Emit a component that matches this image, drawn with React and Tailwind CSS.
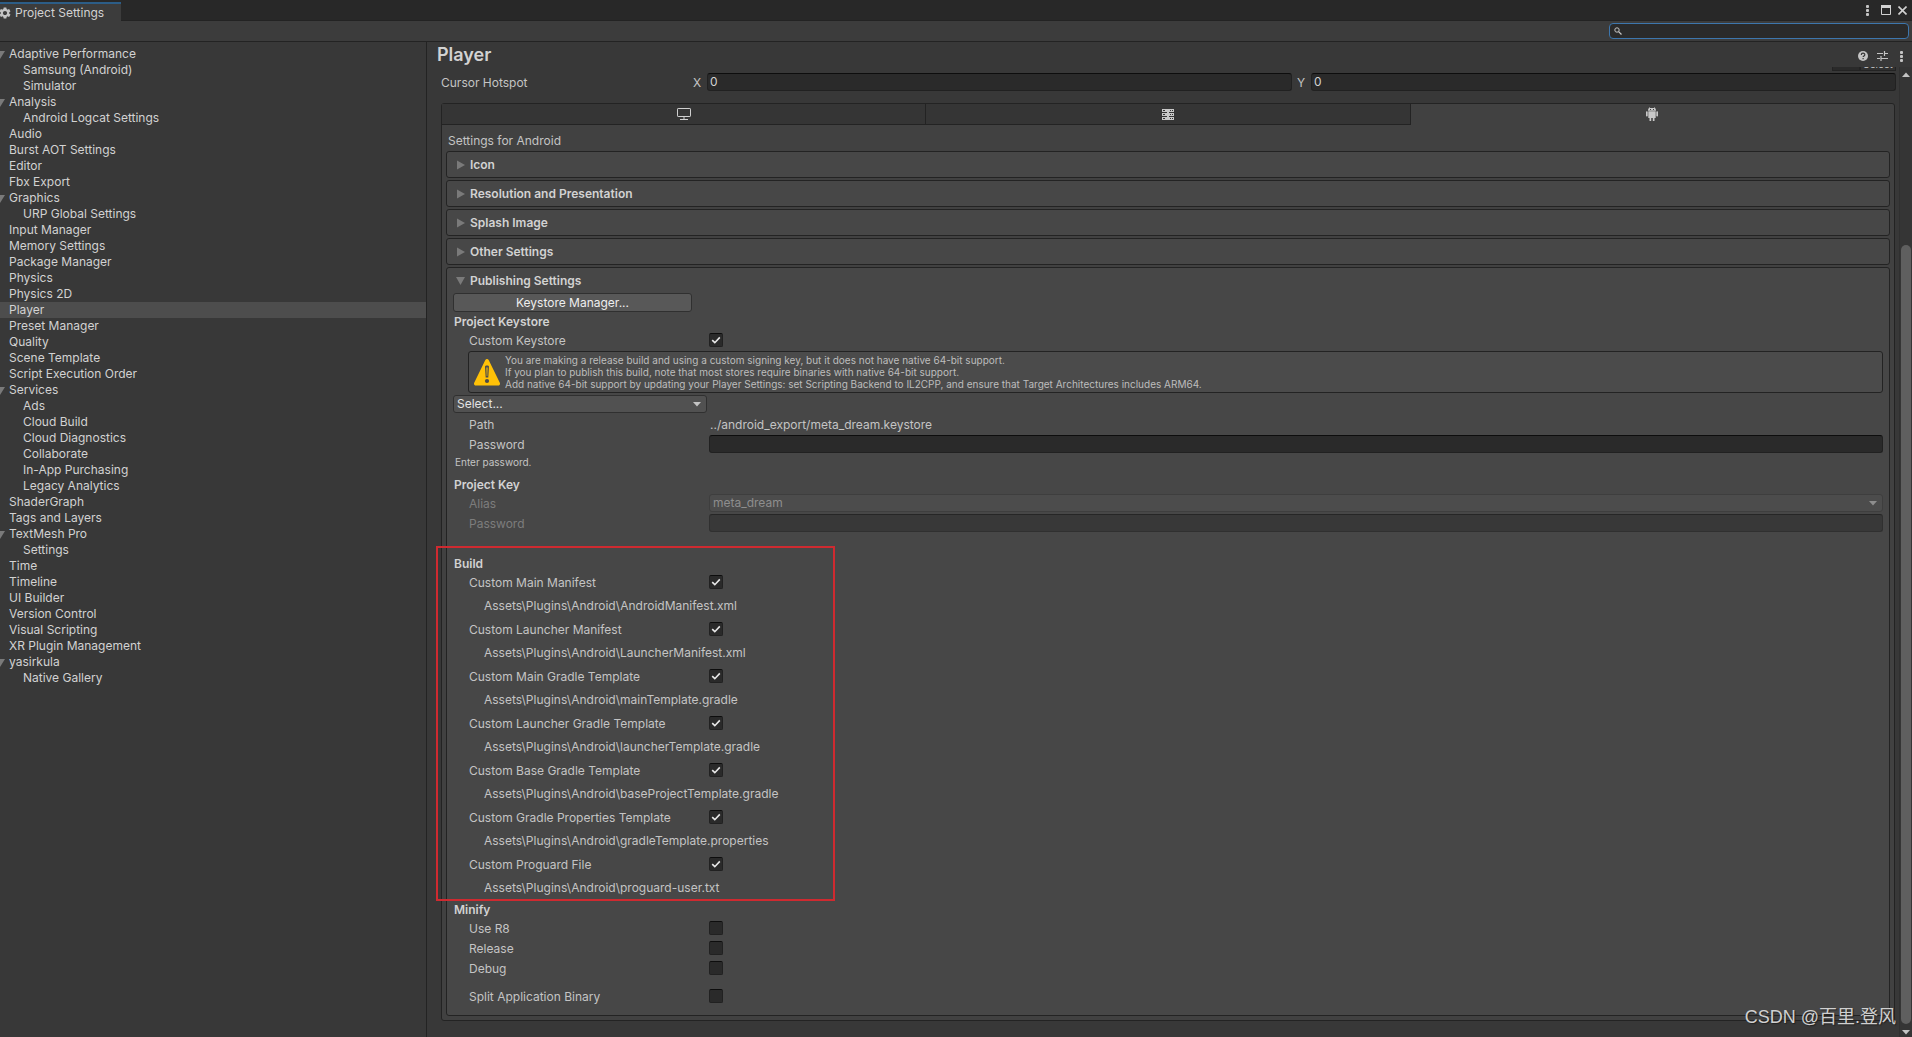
import { useState } from "react";
import { MdSettings } from "react-icons/md";

const navItems = [
  { name: "Adaptive Performance", open: true },
  { name: "Samsung (Android)", child: true },
  { name: "Simulator", child: true },
  { name: "Analysis", open: true },
  { name: "Android Logcat Settings", child: true },
  { name: "Audio" },
  { name: "Burst AOT Settings" },
  { name: "Editor" },
  { name: "Fbx Export" },
  { name: "Graphics", open: true },
  { name: "URP Global Settings", child: true },
  { name: "Input Manager" },
  { name: "Memory Settings" },
  { name: "Package Manager" },
  { name: "Physics" },
  { name: "Physics 2D" },
  { name: "Player" },
  { name: "Preset Manager" },
  { name: "Quality" },
  { name: "Scene Template" },
  { name: "Script Execution Order" },
  { name: "Services", open: true },
  { name: "Ads", child: true },
  { name: "Cloud Build", child: true },
  { name: "Cloud Diagnostics", child: true },
  { name: "Collaborate", child: true },
  { name: "In-App Purchasing", child: true },
  { name: "Legacy Analytics", child: true },
  { name: "ShaderGraph" },
  { name: "Tags and Layers" },
  { name: "TextMesh Pro", open: true },
  { name: "Settings", child: true },
  { name: "Time" },
  { name: "Timeline" },
  { name: "UI Builder" },
  { name: "Version Control" },
  { name: "Visual Scripting" },
  { name: "XR Plugin Management" },
  { name: "yasirkula", open: true },
  { name: "Native Gallery", child: true },
];

const closedSections = [
  "Icon",
  "Resolution and Presentation",
  "Splash Image",
  "Other Settings",
];

const buildFiles = [
  { label: "Custom Main Manifest", file: "AndroidManifest.xml" },
  { label: "Custom Launcher Manifest", file: "LauncherManifest.xml" },
  { label: "Custom Main Gradle Template", file: "mainTemplate.gradle" },
  { label: "Custom Launcher Gradle Template", file: "launcherTemplate.gradle" },
  { label: "Custom Base Gradle Template", file: "baseProjectTemplate.gradle" },
  { label: "Custom Gradle Properties Template", file: "gradleTemplate.properties" },
  { label: "Custom Proguard File", file: "proguard-user.txt" },
];

const fieldClass =
  "h-[18px] min-w-0 rounded-[3px] border border-[#212121] border-t-[#0d0d0d] bg-[#2a2a2a] px-[2px] text-[#d2d2d2] outline-none";

const Dots = () => (
  <svg width="3" height="11" viewBox="0 0 3 11" fill="#c4c4c4">
    <rect x="0" y="0" width="3" height="3" rx="1" />
    <rect x="0" y="4" width="3" height="3" rx="1" />
    <rect x="0" y="8" width="3" height="3" rx="1" />
  </svg>
);

const DesktopIcon = () => (
  <svg width="14" height="13" viewBox="0 0 14 13" fill="none" stroke="#d0d0d0">
    <rect x="0.5" y="0.5" width="13" height="8" rx="0.6" />
    <path d="M7 9v3M3 11.500h8" />
  </svg>
);

const ServerIcon = () => (
  <svg width="12" height="11" viewBox="0 0 12 11">
    <path
      fill="#c8c8c8"
      d="M0 0h12v3H0zM0 4h12v3H0zM0 8h12v3H0zM5 3h2v1H5zM5 7h2v1H5z"
    />
    <path
      fill="#353535"
      d="M1 1h2v1H1zM8 1h1v1H8zM10 1h1v1h-1zM1 5h2v1H1zM8 5h1v1H8zM10 5h1v1h-1zM1 9h2v1H1zM8 9h1v1H8zM10 9h1v1h-1z"
    />
  </svg>
);

const AndroidIcon = () => (
  <svg width="12" height="14" viewBox="0 0 12 14" fill="#c8c8c8">
    <path d="M3 0l1 1h4l1-1v1c.7.6 1 1.500 1 2.500v.2H2v-.2C2 2.500 2.300 1.600 3 1z" />
    <path d="M2.300 4.300h7.400V11H8.500v3H6.800v-3H5.200v3H3.500v-3H2.300z" />
    <rect x="0" y="4.300" width="1.700" height="5.200" rx="0.700" />
    <rect x="10.300" y="4.300" width="1.700" height="5.200" rx="0.700" />
    <path fill="#414141" d="M4 2h1v1H4zM7 2h1v1H7z" />
  </svg>
);

const WarningIcon = () => (
  <svg width="26" height="27" viewBox="0 0 26 27" className="shrink-0">
    <path
      fill="#ffc107"
      d="M11.200 1.200c.8-1.500 2.800-1.500 3.600 0l11 22.600c.6 1.200-.1 2.700-1.500 2.700H1.700c-1.400 0-2.100-1.500-1.500-2.700z"
    />
    <path fill="#4b4b4b" d="M11 7.500c0-1.400 4-1.400 4 0l-.7 11h-2.600z" />
    <path fill="#ffc107" d="M12.400 8.500h1.200l-.3 8.500h-.6z" />
    <circle cx="13" cy="22" r="2.100" fill="#4b4b4b" />
  </svg>
);

const Triangle = ({ open }) => (
  <svg width="9" height="10" viewBox="0 0 9 10" fill="#7a7a7a">
    {open ? <path d="M0 1h9L4.500 9z" /> : <path d="M1 0.500l8 4.500-8 4.500z" />}
  </svg>
);

const Checkbox = ({ id, defaultChecked }) => (
  <span className="grid size-[14px] shrink-0">
    <input
      id={id}
      type="checkbox"
      defaultChecked={defaultChecked}
      className="peer size-[14px] appearance-none rounded-[2px] border border-[#212121] border-t-[#0d0d0d] bg-[#2a2a2a] [grid-area:1/1]"
    />
    <svg
      viewBox="0 0 14 14"
      className="pointer-events-none invisible size-[14px] peer-checked:visible [grid-area:1/1]"
      fill="none"
      stroke="#e8e8e8"
      strokeWidth="1.600"
    >
      <path d="M3.200 7.200l2.600 2.500 5-5.300" />
    </svg>
  </span>
);

const Row = ({ id, label, disabled, children }) => (
  <div className="flex h-[18px] items-center pl-[15px]">
    <label
      htmlFor={id}
      className={`w-60 shrink-0 pt-[2px] ${disabled ? "text-[#7d7d7d]" : ""}`}
    >
      {label}
    </label>
    {children}
  </div>
);

const Heading = ({ children }) => (
  <h3 className="font-semibold leading-[18px] text-[#d2d2d2]">{children}</h3>
);

const Dropdown = ({ id, label, text, disabled }) => (
  <span className="grid w-full">
    <select
      id={id}
      aria-label={label}
      disabled={disabled}
      className={`h-[18px] w-full appearance-none rounded-[3px] border px-[3px] leading-4 outline-none [grid-area:1/1] ${
        disabled
          ? "border-[#3e3e3e] bg-[#4c4c4c] text-[#8e8e8e] opacity-100"
          : "border-[#303030] bg-[#515151] text-[#e4e4e4]"
      }`}
    >
      <option>{text}</option>
    </select>
    <svg
      width="8"
      height="5"
      viewBox="0 0 8 5"
      fill={disabled ? "#8e8e8e" : "#c4c4c4"}
      className="pointer-events-none mr-[6px] self-center justify-self-end [grid-area:1/1]"
    >
      <path d="M0 0h8L4 4.500z" />
    </svg>
  </span>
);

const Sidebar = ({ selected, setSelected }) => (
  <nav className="w-[427px] shrink-0 border-r border-[#232323] pt-1">
    <ul>
      {navItems.map((item) => (
        <li key={item.name}>
          <a
            href="#"
            onClick={() => setSelected(item.name)}
            className={`flex h-4 items-center leading-4 text-[#d2d2d2] ${
              selected === item.name ? "bg-[#4d4d4d]" : ""
            } ${item.child ? "pl-[14px]" : ""}`}
          >
            <svg width="9" height="16" viewBox="0 0 9 16" fill="#7a7a7a">
              {item.open && <path d="M-5 5h10L0 13z" />}
            </svg>
            {item.name}
          </a>
        </li>
      ))}
    </ul>
  </nav>
);

const PublishingSettings = () => (
  <section className="rounded-[3px] border border-[#232323] bg-[#474747] pb-[10px] pl-[6px] pr-[6px]">
    <button className="flex h-[25px] w-full items-center gap-[5px] pl-[3px] font-semibold text-[#d2d2d2]">
      <Triangle open />
      Publishing Settings
    </button>
    <button className="mb-px block h-[19px] w-[239px] rounded-[3px] border border-[#303030] bg-[#585858] leading-[17px] text-[#eeeeee]">
      Keystore Manager...
    </button>
    <div className="pl-px">
      <Heading>Project Keystore</Heading>
      <Row id="keystore" label="Custom Keystore">
        <Checkbox id="keystore" defaultChecked />
      </Row>
      <div className="ml-[14px] mt-[2px] flex h-[42px] items-center gap-[5px] rounded-[3px] border border-[#232323] bg-[#4b4b4b] pl-[5px] text-[10px] leading-3 text-[#bdbdbd]">
        <WarningIcon />
        <p>
          You are making a release build and using a custom signing key, but it does not have native 64-bit support.
          <br />
          If you plan to publish this build, note that most stores require binaries with native 64-bit support.
          <br />
          Add native 64-bit support by updating your Player Settings: set Scripting Backend to IL2CPP, and ensure that Target Architectures includes ARM64.
        </p>
      </div>
    </div>
    <div className="my-[2px] w-[254px]">
      <Dropdown id="existing" label="Select keystore" text="Select..." />
    </div>
    <div className="pl-px">
      <div className="flex flex-col gap-[2px]">
        <Row label="Path">
          <span className="pl-px pt-[2px]">../android_export/meta_dream.keystore</span>
        </Row>
        <Row id="storePass" label="Password">
          <input id="storePass" type="password" className={`${fieldClass} flex-1`} />
        </Row>
      </div>
      <p className="mb-[7px] mt-[2px] pl-px text-[10px] leading-[14px]">Enter password.</p>
      <Heading>Project Key</Heading>
      <div className="flex flex-col gap-[2px]">
        <Row id="alias" label="Alias" disabled>
          <Dropdown id="alias" text="meta_dream" disabled />
        </Row>
        <Row id="keyPass" label="Password" disabled>
          <input
            id="keyPass"
            type="password"
            disabled
            className="h-[18px] min-w-0 flex-1 rounded-[3px] border border-[#303030] border-t-[#262626] bg-[#383838]"
          />
        </Row>
      </div>
      <div className="relative mt-[23px]">
        <div className="pointer-events-none absolute -bottom-1 -left-[18px] -top-[9px] w-[399px] border-2 border-[#cf2a30]" />
        <Heading>Build</Heading>
        <div className="flex flex-col gap-[5px]">
          {buildFiles.map((item) => (
            <div key={item.file}>
              <Row id={item.file} label={item.label}>
                <Checkbox id={item.file} defaultChecked />
              </Row>
              <p className="mt-[6px] pl-[30px] leading-[18px]">
                {"Assets\\Plugins\\Android\\" + item.file}
              </p>
            </div>
          ))}
        </div>
      </div>
      <div className="mt-1">
        <Heading>Minify</Heading>
        <div className="flex flex-col gap-[2px]">
          {["Use R8", "Release", "Debug"].map((name) => (
            <Row key={name} id={name} label={name}>
              <Checkbox id={name} />
            </Row>
          ))}
        </div>
      </div>
      <div className="mt-[10px]">
        <Row id="split" label="Split Application Binary">
          <Checkbox id="split" />
        </Row>
      </div>
    </div>
  </section>
);

const App = () => {
  const [selected, setSelected] = useState("Player");

  return (
    <div className="flex h-screen flex-col overflow-hidden bg-[#383838] font-['Inter',sans-serif] text-[12px] leading-[18px] text-[#c4c4c4]">
      <header className="flex h-[21px] shrink-0 bg-[#282828]">
        <div className="mt-[2px] flex w-[121px] items-center gap-[3px] border-t-2 border-[#2c5d87] bg-[#3c3c3c] text-[#d2d2d2]">
          <MdSettings size={14} className="-ml-[2px]" color="#c4c4c4" />
          Project Settings
        </div>
        <div className="flex flex-1 items-center justify-end border-b border-[#232323] pr-[5px]">
          <button aria-label="Menu" className="mr-[12px]">
            <Dots />
          </button>
          <button aria-label="Maximize" className="mr-[7px]">
            <svg width="10" height="10" viewBox="0 0 10 10" fill="none" stroke="#d2d2d2">
              <path d="M0.500 0.500h9v9h-9z" />
              <path d="M0 1.500h10" strokeWidth="3" />
            </svg>
          </button>
          <button aria-label="Close">
            <svg width="9" height="9" viewBox="0 0 9 9" stroke="#d2d2d2" strokeWidth="1.600">
              <path d="M0.500 0.500l8 8M8.500 0.500l-8 8" />
            </svg>
          </button>
        </div>
      </header>

      <div className="flex h-[21px] shrink-0 items-center justify-end border-b border-[#232323] bg-[#3c3c3c] pr-[3px]">
        <label className="flex h-4 w-[300px] items-center rounded-[4px] border border-[#3d76ad] bg-[#2a2a2a] pl-1">
          <svg width="8" height="8" viewBox="0 0 8 8" fill="none" stroke="#c4c4c4">
            <circle cx="3" cy="3" r="2.200" />
            <path d="M4.600 4.600L7.500 7.500" strokeWidth="1.300" />
          </svg>
          <input
            type="text"
            aria-label="Search"
            className="ml-1 h-3 min-w-0 flex-1 bg-transparent text-[10px] outline-none"
          />
        </label>
      </div>

      <div className="flex min-h-0 flex-1">
        <Sidebar selected={selected} setSelected={setSelected} />

        <main className="flex min-w-0 flex-1 flex-col">
          <div className="flex h-[25px] shrink-0 items-center justify-between pl-[10px] pr-[9px]">
            <h1 className="text-[18px] font-semibold leading-6 text-[#d2d2d2]">Player</h1>
            <div className="flex items-center pt-[3px]">
              <button aria-label="Help" className="mr-[9px]">
                <svg width="10" height="10" viewBox="0 0 10 10">
                  <circle cx="5" cy="5" r="5" fill="#c4c4c4" />
                  <path
                    d="M3.300 3.900c0-2.300 3.500-2.200 3.500-.2 0 1.200-1.700 1.200-1.700 2.400M5.100 7v1.200"
                    fill="none"
                    stroke="#383838"
                    strokeWidth="1.200"
                  />
                </svg>
              </button>
              <button aria-label="Presets" className="mr-[12px]">
                <svg width="11" height="10" viewBox="0 0 11 10" fill="none" stroke="#c4c4c4" strokeWidth="1.200">
                  <path d="M0 2.500h6M7.500 0v5M7.500 2.500H11M0 7.500h3M4 5v5M4 7.500h7" />
                </svg>
              </button>
              <button aria-label="More">
                <Dots />
              </button>
            </div>
          </div>

          <div className="flex min-h-0 flex-1">
            <div className="min-w-0 flex-1 overflow-hidden pl-[14px] pr-1">
              {/* tail of the cursor texture slot, scrolled out of view */}
              <div className="-mr-px flex h-1 items-end justify-end overflow-hidden">
                <div className="h-10 w-7 border border-[#232323] bg-[#2a2a2a]" />
                <button className="h-[14px] w-9 border border-[#232323] bg-[#303030] text-[10px] leading-[8px]">
                  Select
                </button>
              </div>

              <div className="-mr-px mt-[2px] flex h-[18px] items-center">
                <span className="w-[251px] shrink-0 pt-[2px]">Cursor Hotspot</span>
                <label htmlFor="hotX" className="w-[15px] shrink-0 pl-px pt-[2px]">
                  X
                </label>
                <input id="hotX" defaultValue="0" className={`${fieldClass} mr-1 flex-1`} />
                <label htmlFor="hotY" className="w-[15px] shrink-0 pl-px pt-[2px]">
                  Y
                </label>
                <input id="hotY" defaultValue="0" className={`${fieldClass} flex-1`} />
              </div>

              <div className="mt-3 rounded-[3px] border border-[#232323] bg-[#414141]">
                <div className="flex h-[21px]">
                  <button
                    aria-label="Standalone"
                    className="flex flex-1 items-center justify-center border-b border-r border-[#232323] bg-[#353535]"
                  >
                    <DesktopIcon />
                  </button>
                  <button
                    aria-label="Dedicated Server"
                    className="flex flex-1 items-center justify-center border-b border-r border-[#232323] bg-[#353535]"
                  >
                    <ServerIcon />
                  </button>
                  <button aria-label="Android" className="flex flex-1 items-center justify-center pb-px">
                    <AndroidIcon />
                  </button>
                </div>
                <div className="p-1 pt-[7px]">
                  <h2 className="mb-px pl-[2px]">Settings for Android</h2>
                  <div className="flex flex-col gap-[2px]">
                    {closedSections.map((name) => (
                      <button
                        key={name}
                        className="flex h-[27px] items-center gap-[5px] rounded-[3px] border border-[#232323] bg-[#474747] pl-[9px] font-semibold text-[#d2d2d2]"
                      >
                        <Triangle />
                        {name}
                      </button>
                    ))}
                    <PublishingSettings />
                  </div>
                </div>
              </div>
            </div>

            <div className="flex w-[13px] shrink-0 flex-col items-center border-l border-[#303030] bg-[#353535] pb-[2px] pt-[5px]">
              <svg width="8" height="5" viewBox="0 0 8 5" fill="#c4c4c4">
                <path d="M0 5h8L4 0.500z" />
              </svg>
              <div className="mb-[6px] mt-[168px] w-[10px] flex-1 rounded-full bg-[#5f5f5f]" />
              <svg width="8" height="5" viewBox="0 0 8 5" fill="#c4c4c4">
                <path d="M0 0h8L4 4.500z" />
              </svg>
            </div>
          </div>
        </main>
      </div>

      <div className="pointer-events-none absolute bottom-2 right-4 font-['Liberation_Sans','Noto_Sans_CJK_SC',sans-serif] text-[18px] leading-6 text-[#d0d0d0] [text-shadow:1px_1px_1px_#222]">
        CSDN @百里.登风
      </div>
    </div>
  );
};

export default App;
